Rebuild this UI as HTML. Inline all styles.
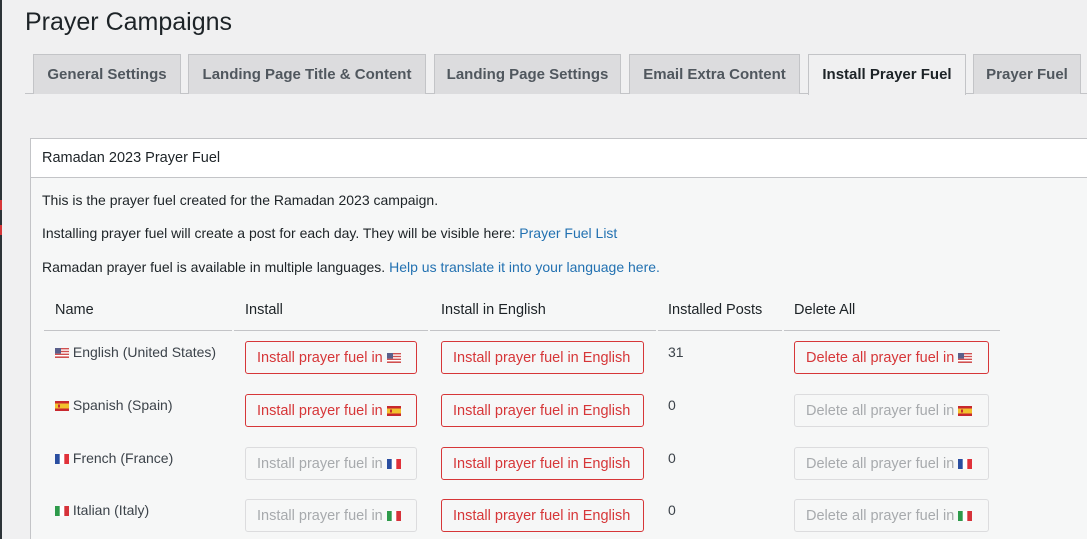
<!DOCTYPE html>
<html style="width:1087px;height:539px;overflow:hidden"><head><meta charset="utf-8"><style>
*{box-sizing:border-box;margin:0;padding:0}
body{width:1087px;height:539px;overflow:hidden;background:#f0f0f1;font-family:"Liberation Sans","DejaVu Sans",sans-serif;color:#3c434a;position:relative;font-size:14px}
.a{position:absolute;white-space:nowrap}
.strip{left:0;top:0;width:2px;height:539px;background:#2c3338}
h1{position:absolute;left:25px;top:8px;font-size:25px;font-weight:400;color:#1d2327}
.tabline{left:25px;top:93px;width:1062px;height:1px;background:#c3c4c7}
.tab{position:absolute;top:54px;height:40px;border:1px solid #c3c4c7;border-bottom:none;background:#dcdcde;font-weight:700;font-size:15px;color:#50575e;text-align:center;line-height:40px}
.tab.act{background:#f0f0f1;color:#1d2327;height:41px}
.card{left:30px;top:138px;width:1057px;height:401px;border:1px solid #c3c4c7;border-right:none;border-bottom:none;background:#f6f7f7}
.hd{position:absolute;left:0;top:0;width:100%;height:39px;background:#fff;border-bottom:1px solid #c3c4c7;padding:11px 11px;font-size:14.5px;color:#1d2327}
p.a{font-size:14px;color:#1d2327}
a{color:#2271b1;text-decoration:none}
.th{font-size:14.5px;color:#1d2327}
.ul{top:330px;height:1px;background:#c3c4c7}
.btn{position:absolute;height:33px;border:1px solid #d63638;border-radius:3px;color:#d63638;font-size:14.5px;line-height:32px;padding-left:11px;background:#f6f7f7;white-space:nowrap}
.btn.d{border-color:#dcdcde;color:#a7aaad}
svg{vertical-align:-1px}
.nm{font-size:14px;color:#3c434a}
</style></head><body>
<div class="a strip"></div>
<div class="a" style="left:0;top:200px;width:2px;height:10px;background:#d63638"></div>
<div class="a" style="left:0;top:225px;width:2px;height:10px;background:#d63638"></div>
<h1>Prayer Campaigns</h1>
<div class="a tabline"></div>
<div class="tab" style="left:33px;width:148px">General Settings</div>
<div class="tab" style="left:188px;width:238px">Landing Page Title &amp; Content</div>
<div class="tab" style="left:434px;width:187px">Landing Page Settings</div>
<div class="tab" style="left:629px;width:171px">Email Extra Content</div>
<div class="tab act" style="left:808px;width:158px">Install Prayer Fuel</div>
<div class="tab" style="left:973px;width:108px">Prayer Fuel</div>
<div class="a card"><div class="hd">Ramadan 2023 Prayer Fuel</div></div>
<p class="a" style="left:42px;top:192px">This is the prayer fuel created for the Ramadan 2023 campaign.</p>
<p class="a" style="left:42px;top:225px">Installing prayer fuel will create a post for each day. They will be visible here: <a>Prayer Fuel List</a></p>
<p class="a" style="left:42px;top:259px">Ramadan prayer fuel is available in multiple languages. <a>Help us translate it into your language here.</a></p>
<div class="a th" style="left:55px;top:302px">Name</div>
<div class="a th" style="left:245px;top:302px">Install</div>
<div class="a th" style="left:441px;top:302px">Install in English</div>
<div class="a th" style="left:668px;top:302px">Installed Posts</div>
<div class="a th" style="left:794px;top:302px">Delete All</div>
<div class="a ul" style="left:44px;width:188px"></div>
<div class="a ul" style="left:234px;width:194px"></div>
<div class="a ul" style="left:430px;width:226px"></div>
<div class="a ul" style="left:658px;width:124px"></div>
<div class="a ul" style="left:784px;width:216px"></div>

<svg width="0" height="0" style="position:absolute"><defs>
<g id="us"><rect width="14" height="10" fill="#fff"/><rect y="0" width="14" height="1.4" fill="#d05050"/><rect y="2.8" width="14" height="1.4" fill="#d05050"/><rect y="5.6" width="14" height="1.4" fill="#d05050"/><rect y="8.4" width="14" height="1.6" fill="#d05050"/><rect width="6" height="5.6" fill="#5a5f8a"/></g>
<g id="es"><rect width="14" height="10" fill="#c8282e"/><rect y="2.5" width="14" height="5" fill="#f2c12e"/><rect x="3" y="3.5" width="2" height="3" fill="#c8282e"/></g>
<g id="fr"><rect width="14" height="10" fill="#fff"/><rect width="4.7" height="10" fill="#2a4ea0"/><rect x="9.3" width="4.7" height="10" fill="#e0323a"/></g>
<g id="it"><rect width="14" height="10" fill="#fff"/><rect width="4.7" height="10" fill="#2d9a4a"/><rect x="9.3" width="4.7" height="10" fill="#d6333a"/></g>
</defs></svg>

<div class="a nm" style="left:55px;top:344px"><svg width="14" height="10"><use href="#us"/></svg> English (United States)</div>
<div class="btn" style="left:245px;top:341px;width:172px">Install prayer fuel in <svg width="14" height="10"><use href="#us"/></svg></div>
<div class="btn" style="left:441px;top:341px;width:203px">Install prayer fuel in English</div>
<div class="a nm" style="left:668px;top:344px">31</div>
<div class="btn" style="left:794px;top:341px;width:195px">Delete all prayer fuel in <svg width="14" height="10"><use href="#us"/></svg></div>

<div class="a nm" style="left:55px;top:397px"><svg width="14" height="10"><use href="#es"/></svg> Spanish (Spain)</div>
<div class="btn" style="left:245px;top:394px;width:172px">Install prayer fuel in <svg width="14" height="10"><use href="#es"/></svg></div>
<div class="btn" style="left:441px;top:394px;width:203px">Install prayer fuel in English</div>
<div class="a nm" style="left:668px;top:397px">0</div>
<div class="btn d" style="left:794px;top:394px;width:195px">Delete all prayer fuel in <svg width="14" height="10"><use href="#es"/></svg></div>

<div class="a nm" style="left:55px;top:450px"><svg width="14" height="10"><use href="#fr"/></svg> French (France)</div>
<div class="btn d" style="left:245px;top:447px;width:172px">Install prayer fuel in <svg width="14" height="10"><use href="#fr"/></svg></div>
<div class="btn" style="left:441px;top:447px;width:203px">Install prayer fuel in English</div>
<div class="a nm" style="left:668px;top:450px">0</div>
<div class="btn d" style="left:794px;top:447px;width:195px">Delete all prayer fuel in <svg width="14" height="10"><use href="#fr"/></svg></div>

<div class="a nm" style="left:55px;top:502px"><svg width="14" height="10"><use href="#it"/></svg> Italian (Italy)</div>
<div class="btn d" style="left:245px;top:499px;width:172px">Install prayer fuel in <svg width="14" height="10"><use href="#it"/></svg></div>
<div class="btn" style="left:441px;top:499px;width:203px">Install prayer fuel in English</div>
<div class="a nm" style="left:668px;top:502px">0</div>
<div class="btn d" style="left:794px;top:499px;width:195px">Delete all prayer fuel in <svg width="14" height="10"><use href="#it"/></svg></div>
</body></html>
